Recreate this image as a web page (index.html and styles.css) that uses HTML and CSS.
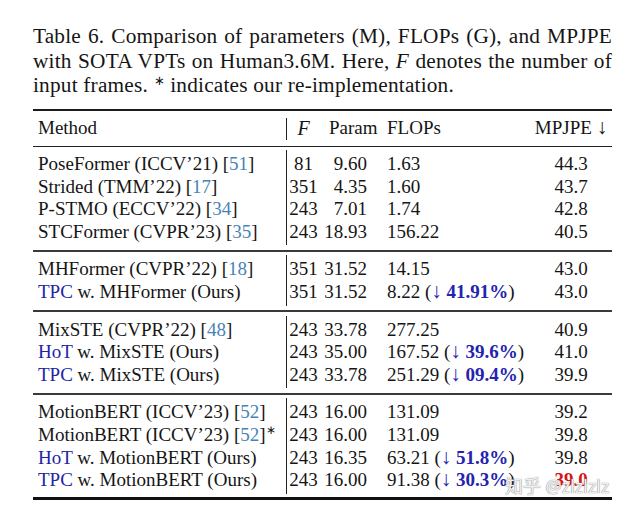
FILE: index.html
```html
<!DOCTYPE html>
<html>
<head>
<meta charset="utf-8">
<link rel="stylesheet" href="styles.css">
</head>
<body>
<div class="page">
  <p class="caption">Table 6. Comparison of parameters (M), FLOPs (G), and MPJPE with SOTA VPTs on Human3.6M. Here, <i>F</i> denotes the number of input frames. <sup class="ast">∗</sup> indicates our re-implementation.</p>
  <div class="table">
    <div class="sec head">
      <span class="vbar"></span>
      <div class="row">
        <span class="c-m">Method</span><span class="c-f"><i>F</i></span><span class="c-p hp">Param</span><span class="c-fl">FLOPs</span><span class="c-e">MPJPE <span class="harr">↓</span></span>
      </div>
    </div>
    <div class="sec">
      <span class="vbar r4"></span>
      <div class="row"><span class="c-m">PoseFormer (ICCV’21) [<span class="cite">51</span>]</span><span class="c-f">81</span><span class="c-p">9.60</span><span class="c-fl">1.63</span><span class="c-e">44.3</span></div>
      <div class="row"><span class="c-m">Strided (TMM’22) [<span class="cite">17</span>]</span><span class="c-f">351</span><span class="c-p">4.35</span><span class="c-fl">1.60</span><span class="c-e">43.7</span></div>
      <div class="row"><span class="c-m">P-STMO (ECCV’22) [<span class="cite">34</span>]</span><span class="c-f">243</span><span class="c-p">7.01</span><span class="c-fl">1.74</span><span class="c-e">42.8</span></div>
      <div class="row"><span class="c-m">STCFormer (CVPR’23) [<span class="cite">35</span>]</span><span class="c-f">243</span><span class="c-p">18.93</span><span class="c-fl">156.22</span><span class="c-e">40.5</span></div>
    </div>
    <div class="sec">
      <span class="vbar r2"></span>
      <div class="row"><span class="c-m">MHFormer (CVPR’22) [<span class="cite">18</span>]</span><span class="c-f">351</span><span class="c-p">31.52</span><span class="c-fl">14.15</span><span class="c-e">43.0</span></div>
      <div class="row"><span class="c-m"><span class="ours">TPC</span> w. MHFormer (Ours)</span><span class="c-f">351</span><span class="c-p">31.52</span><span class="c-fl">8.22 (<span class="arr">↓</span> <b class="pct">41.91%</b>)</span><span class="c-e">43.0</span></div>
    </div>
    <div class="sec">
      <span class="vbar r3"></span>
      <div class="row"><span class="c-m">MixSTE (CVPR’22) [<span class="cite">48</span>]</span><span class="c-f">243</span><span class="c-p">33.78</span><span class="c-fl">277.25</span><span class="c-e">40.9</span></div>
      <div class="row"><span class="c-m"><span class="ours">HoT</span> w. MixSTE (Ours)</span><span class="c-f">243</span><span class="c-p">35.00</span><span class="c-fl">167.52 (<span class="arr">↓</span> <b class="pct">39.6%</b>)</span><span class="c-e">41.0</span></div>
      <div class="row"><span class="c-m"><span class="ours">TPC</span> w. MixSTE (Ours)</span><span class="c-f">243</span><span class="c-p">33.78</span><span class="c-fl">251.29 (<span class="arr">↓</span> <b class="pct">09.4%</b>)</span><span class="c-e">39.9</span></div>
    </div>
    <div class="sec last">
      <span class="vbar r4"></span>
      <div class="row"><span class="c-m">MotionBERT (ICCV’23) [<span class="cite">52</span>]</span><span class="c-f">243</span><span class="c-p">16.00</span><span class="c-fl">131.09</span><span class="c-e">39.2</span></div>
      <div class="row"><span class="c-m">MotionBERT (ICCV’23) [<span class="cite">52</span>]<sup class="ast2">∗</sup></span><span class="c-f">243</span><span class="c-p">16.00</span><span class="c-fl">131.09</span><span class="c-e">39.8</span></div>
      <div class="row"><span class="c-m"><span class="ours">HoT</span> w. MotionBERT (Ours)</span><span class="c-f">243</span><span class="c-p">16.35</span><span class="c-fl">63.21 (<span class="arr">↓</span> <b class="pct">51.8%</b>)</span><span class="c-e">39.8</span></div>
      <div class="row"><span class="c-m"><span class="ours">TPC</span> w. MotionBERT (Ours)</span><span class="c-f">243</span><span class="c-p">16.00</span><span class="c-fl">91.38 (<span class="arr">↓</span> <b class="pct">30.3%</b>)</span><span class="c-e"><b class="best">39.0</b></span></div>
    </div>
  </div>
</div>
<div class="watermark"><span class="wm-cn">知乎</span> <span class="wm-id">@zlzlzlz</span></div>
</body>
</html>
```

FILE: styles.css
```css
html, body {
  margin: 0;
  padding: 0;
  background: #ffffff;
}

body {
  font-family: "Liberation Serif", "Times New Roman", serif;
  color: #151515;
  position: relative;
  width: 635px;
  height: 511px;
  overflow: hidden;
}

.page {
  padding: 24px 0 0 33px;
  width: 579px;
}

.caption {
  margin: 0 0 11px 0;
  font-size: 21.3px;
  letter-spacing: 0.2px;
  line-height: 24.5px;
  text-align: justify;
}

.caption i {
  font-style: italic;
  line-height: 0;
}

.ast {
  font-size: 13px;
  line-height: 0;
  vertical-align: 7px;
}

.table {
  border-top: 2px solid #1c1c1c;
  font-size: 19px;
}

.sec {
  display: grid;
  grid-template-columns: 253px 1px 33px 64px 146px 82px;
  grid-auto-rows: 22.6px;
  line-height: 22.6px;
  padding: 6.5px 0 6.5px 0;
  border-bottom: 2px solid #3a3a3a;
}

.sec.head {
  padding-top: 6px;
  border-bottom: 1px solid #222;
}

.sec.last {
  border-bottom: 3px solid #111;
  padding-bottom: 5px;
}

.row {
  display: contents;
}

.vbar {
  grid-column: 2;
  grid-row: 1 / span 1;
  background: #222;
  margin: 1px 0 -1px 0;
}

.vbar.r2 { grid-row: 1 / span 2; margin: -3px 0 -2px 0; }
.vbar.r3 { grid-row: 1 / span 3; margin: -3px 0 -2px 0; }
.vbar.r4 { grid-row: 1 / span 4; margin: -3px 0 -2px 0; }

.c-m {
  padding-left: 5px;
  white-space: nowrap;
}

.c-f {
  text-align: center;
}

.c-f i {
  font-size: 20px;
}

.c-p {
  text-align: right;
  padding-right: 17px;
}

.c-p.hp {
  text-align: left;
  padding: 0 0 0 9px;
}

.c-fl {
  padding-left: 3px;
  white-space: nowrap;
}

.c-e {
  text-align: center;
  white-space: nowrap;
}

.harr {
  font-size: 21px;
  line-height: 0;
}

.cite {
  color: #4683b8;
}

.ours {
  color: #2323a6;
}

.arr {
  color: #2323b0;
  font-size: 21px;
  line-height: 0;
}

.pct {
  color: #2323b0;
  font-weight: bold;
}

.best {
  color: #d41515;
  font-weight: bold;
}

.ast2 {
  font-size: 12px;
  line-height: 0;
  vertical-align: 7px;
}

.watermark {
  position: absolute;
  left: 505px;
  top: 473px;
  font-size: 18px;
  line-height: 24px;
  color: rgba(255, 255, 255, 0.9);
  text-shadow: 0 0 1px #8a8a8a, 0 0 1px #8a8a8a;
  white-space: nowrap;
}

.wm-cn {
  font-family: "Noto Sans CJK SC", sans-serif;
}

.wm-id {
  font-family: "Noto Sans", sans-serif;
}
```
